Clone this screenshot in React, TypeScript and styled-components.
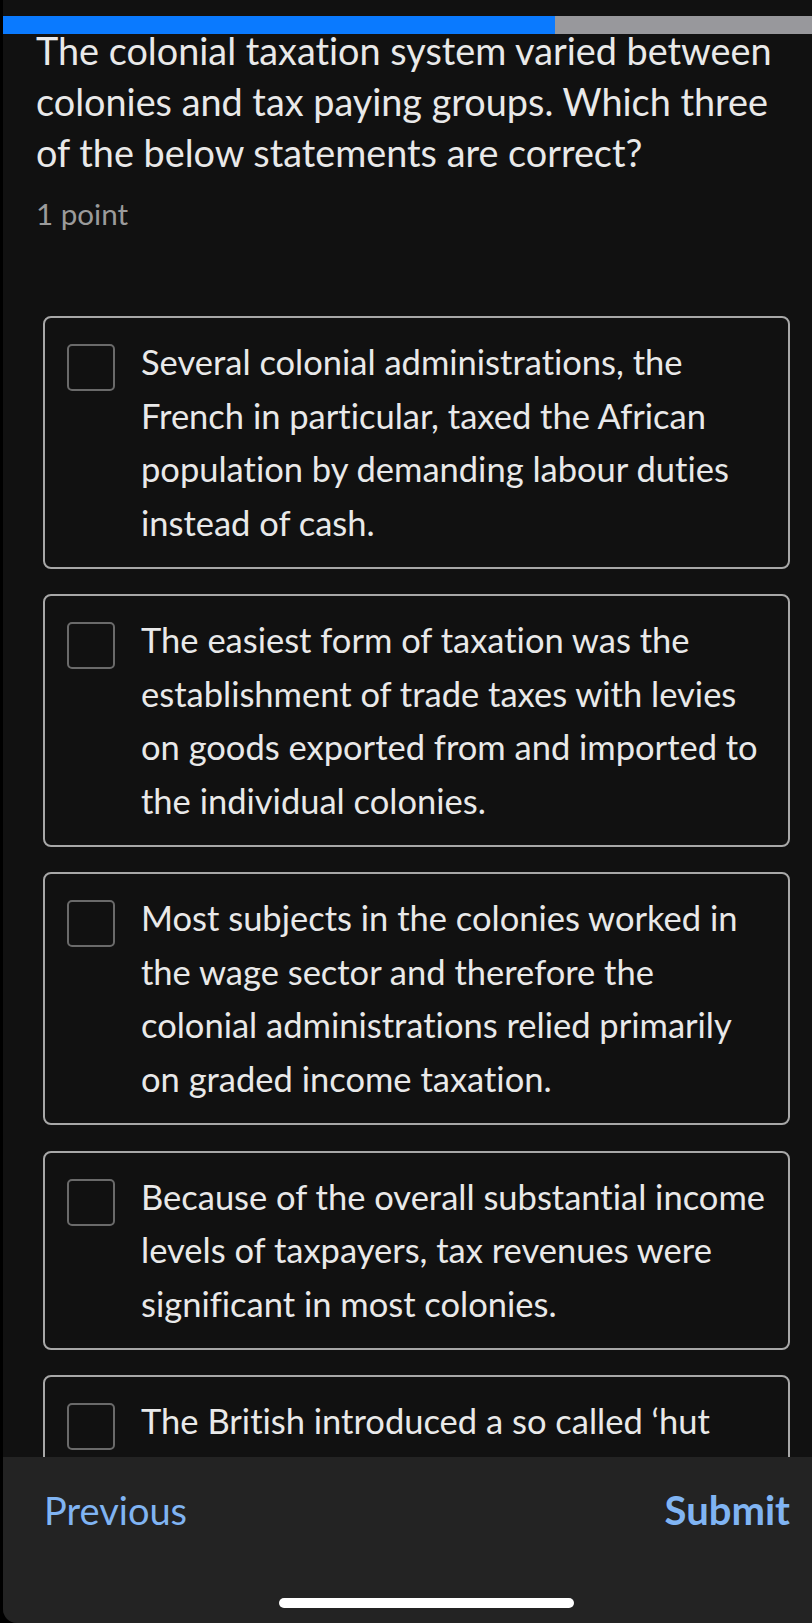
import React from "react";
import styled, { createGlobalStyle } from "styled-components";

const Global = createGlobalStyle`
  html, body { margin: 0; padding: 0; background: #000; }
  #root { width: 812px; height: 1623px; }
  * { box-sizing: border-box; }
`;

const Frame = styled.div`
  width: 812px;
  height: 1623px;
  background: #000;
  padding-left: 3px;
  font-family: "Lato", "Noto Sans", sans-serif;
  font-variant-ligatures: no-common-ligatures;
`;

const Screen = styled.div`
  height: 100%;
  display: flex;
  flex-direction: column;
  background: #111111;
  border-bottom-left-radius: 14px;
  overflow: hidden;
`;

const Scroll = styled.div`
  flex: 1;
  min-height: 0;
  overflow: hidden;
  padding-top: 16px;
`;

const Progress = styled.div`
  height: 18px;
  background: #98989c;
  display: flex;
`;

const ProgressFill = styled.div`
  height: 100%;
  background: #0a7aff;
`;

const Question = styled.h1`
  margin: -9px 21px 0 33px;
  font-size: 37.8px;
  line-height: 51px;
  font-weight: 400;
  color: #e9e9e9;
`;

const Points = styled.div`
  margin: 17.6px 0 0 33px;
  font-size: 29.6px;
  line-height: 36px;
  color: #9b9b9b;
`;

const Options = styled.div`
  display: flex;
  flex-direction: column;
  gap: 25.2px;
  margin: 84.5px 22px 0 40px;
`;

const Option = styled.label`
  display: flex;
  align-items: flex-start;
  gap: 26px;
  padding: 17px 15px 18px 22px;
  border: 2px solid #a8a8a8;
  border-radius: 8px;
  background: #111111;
`;

const Box = styled.span`
  flex: none;
  width: 48px;
  height: 47px;
  margin-top: 9px;
  border: 2px solid #6a6a6a;
  border-radius: 5px;
`;

const OptionText = styled.span`
  font-size: 34.5px;
  line-height: 53.5px;
  color: #e9e9e9;
`;

const BottomBar = styled.div`
  flex: none;
  height: 166px;
  background: #232323;
  display: flex;
  flex-direction: column;
  padding: 30.5px 22px 15px 41px;
`;

const NavRow = styled.div`
  display: flex;
  justify-content: space-between;
  align-items: baseline;
`;

const NavButton = styled.button<{ $bold?: boolean }>`
  background: none;
  border: none;
  padding: 0;
  margin: 0;
  font-family: inherit;
  font-size: ${(p) => (p.$bold ? "40px" : "38px")};
  line-height: 44px;
  font-weight: ${(p) => (p.$bold ? 700 : 400)};
  color: #80b4f3;
`;

const Indicator = styled.div`
  align-self: center;
  margin-top: auto;
  width: 295px;
  height: 10px;
  border-radius: 5px;
  background: #ffffff;
  transform: translateX(9px);
`;

const options = [
  "Several colonial administrations, the French in particular, taxed the African population by demanding labour duties instead of cash.",
  "The easiest form of taxation was the establishment of trade taxes with levies on goods exported from and imported to the individual colonies.",
  "Most subjects in the colonies worked in the wage sector and therefore the colonial administrations relied primarily on graded income taxation.",
  "Because of the overall substantial income levels of taxpayers, tax revenues were significant in most colonies.",
  "The British introduced a so called \u2018hut tax\u2019.",
];

export default function App() {
  const current = 15;
  const total = 22;
  return (
    <>
      <Global />
      <Frame>
        <Screen>
          <Scroll>
            <Progress>
              <ProgressFill style={{ width: `${(current / total) * 100}%` }} />
            </Progress>
            <Question>
              The colonial taxation system varied between colonies and tax paying groups. Which three of the below statements are correct?
            </Question>
            <Points>1 point</Points>
            <Options>
              {options.map((t) => (
                <Option key={t}>
                  <Box />
                  <OptionText>{t}</OptionText>
                </Option>
              ))}
            </Options>
          </Scroll>
          <BottomBar>
            <NavRow>
              <NavButton>Previous</NavButton>
              <NavButton $bold>Submit</NavButton>
            </NavRow>
            <Indicator />
          </BottomBar>
        </Screen>
      </Frame>
    </>
  );
}
